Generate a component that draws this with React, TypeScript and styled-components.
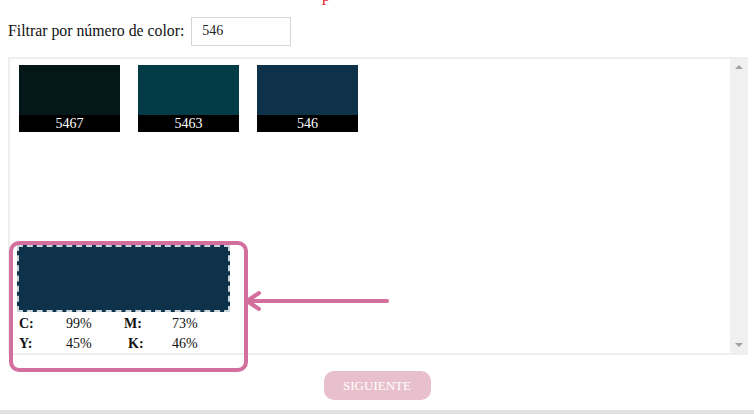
import React, { useState } from 'react';
import styled, { createGlobalStyle } from 'styled-components';

interface Swatch {
    code: string;
    color: string;
    cmyk: [number, number, number, number];
}

const swatches: Swatch[] = [
    { code: '5467', color: '#041719', cmyk: [90, 60, 70, 85] },
    { code: '5463', color: '#033b46', cmyk: [100, 45, 50, 60] },
    { code: '546', color: '#0d3249', cmyk: [99, 73, 45, 46] },
];

const GlobalStyle = createGlobalStyle`
    html, body {
        margin: 0;
        padding: 0;
        background: #ffffff;
    }
    body {
        font-family: "Liberation Serif", "Times New Roman", serif;
        color: #111;
    }
`;

const Page = styled.div`
    position: relative;
    width: 754px;
    height: 414px;
    overflow: hidden;
    box-sizing: border-box;
`;

const TopMark = styled.div`
    height: 5px;
    overflow: hidden;
    padding-left: 322px;
    color: #e0262b;
    font-size: 16px;
    line-height: 16px;

    span {
        display: block;
        margin-top: -12px;
    }
`;

const FilterRow = styled.div`
    display: flex;
    align-items: center;
    gap: 7px;
    margin: 11px 8px 0;
    height: 30px;
`;

const Label = styled.label`
    font-size: 15.8px;
    color: #111;
`;

const FilterInput = styled.input`
    width: 100px;
    height: 29px;
    box-sizing: border-box;
    border: 1px solid #d6d6d6;
    padding: 0 10px;
    font-family: "Liberation Serif", serif;
    font-size: 14px;
    color: #222;
    outline: none;
`;

const Panel = styled.div`
    display: flex;
    margin: 11px 8px 0;
    width: 740px;
    height: 298px;
    box-sizing: border-box;
    border: 2px solid #eeeeee;
    border-right-width: 0;
`;

const Content = styled.div`
    flex: 1;
    display: flex;
    flex-direction: column;
    justify-content: space-between;
    padding: 6px 0 0 0;
`;

const Grid = styled.div`
    display: flex;
    gap: 18px;
    padding-left: 9px;
`;

const Chip = styled.div<{ $color: string }>`
    width: 101px;
    height: 67px;
    background: ${p => p.$color};
    display: flex;
    flex-direction: column;
    justify-content: flex-end;
    cursor: pointer;
`;

const ChipLabel = styled.div`
    height: 17px;
    background: #000;
    color: #fff;
    font-size: 14px;
    line-height: 17px;
    text-align: center;
`;

const Selected = styled.div`
    padding: 0 0 0 7px;
    margin-bottom: -1px;
`;

const BigSwatch = styled.div<{ $color: string }>`
    width: 213px;
    height: 67px;
    box-sizing: border-box;
    background: ${p => p.$color};
    border: 2px dashed #c9d3da;
`;

const CmykGrid = styled.div`
    display: grid;
    grid-template-columns: 47px 58px 48px 50px;
    padding-left: 2px;
    margin-top: 2px;
    font-size: 14px;
    line-height: 20px;
`;

const Key = styled.span<{ $shift?: number }>`
    font-weight: bold;
    padding-left: ${p => p.$shift ?? 0}px;
`;

const Scrollbar = styled.div`
    width: 18px;
    background: #f0f0f0;
    display: flex;
    flex-direction: column;
    justify-content: space-between;
    align-items: center;
    padding: 6px 0;
    box-sizing: border-box;
`;

const Arrow = styled.div<{ $down?: boolean }>`
    width: 0;
    height: 0;
    border-left: 4px solid transparent;
    border-right: 4px solid transparent;
    ${p => p.$down
        ? 'border-top: 4px solid #a3a3a3;'
        : 'border-bottom: 4px solid #a3a3a3;'}
`;

const ButtonRow = styled.div`
    display: flex;
    justify-content: center;
    margin-top: 16px;
`;

const NextButton = styled.button`
    width: 107px;
    height: 29px;
    border: none;
    border-radius: 10px;
    background: #e8bfcc;
    color: #ffffff;
    font-family: "Liberation Serif", serif;
    font-size: 13px;
    cursor: pointer;
`;

const Footer = styled.div`
    margin-top: 10px;
    height: 4px;
    background: #e2e2e2;
`;

const Highlight = styled.div`
    position: absolute;
    left: 9px;
    top: 241px;
    width: 239px;
    height: 131px;
    box-sizing: border-box;
    border: 4px solid #d36f9d;
    border-radius: 10px;
    pointer-events: none;
`;

const Pointer = styled.svg`
    position: absolute;
    left: 244px;
    top: 290px;
    pointer-events: none;
`;

export default function App() {
    const [query, setQuery] = useState('546');
    const current = swatches[2];
    const [c, m, y, k] = current.cmyk;

    return (
        <Page>
            <GlobalStyle />
            <TopMark><span>p</span></TopMark>
            <FilterRow>
                <Label>Filtrar por número de color:</Label>
                <FilterInput value={query} onChange={e => setQuery(e.target.value)} />
            </FilterRow>
            <Panel>
                <Content>
                    <Grid>
                        {swatches.map(s => (
                            <Chip key={s.code} $color={s.color}>
                                <ChipLabel>{s.code}</ChipLabel>
                            </Chip>
                        ))}
                    </Grid>
                    <Selected>
                        <BigSwatch $color={current.color} />
                        <CmykGrid>
                            <Key>C:</Key><span>{c}%</span>
                            <Key>M:</Key><span>{m}%</span>
                            <Key>Y:</Key><span>{y}%</span>
                            <Key $shift={4}>K:</Key><span>{k}%</span>
                        </CmykGrid>
                    </Selected>
                </Content>
                <Scrollbar>
                    <Arrow />
                    <Arrow $down />
                </Scrollbar>
            </Panel>
            <ButtonRow>
                <NextButton>SIGUIENTE</NextButton>
            </ButtonRow>
            <Footer />
            <Highlight />
            <Pointer width="150" height="24" viewBox="0 0 150 24">
                <g stroke="#d36f9d" strokeWidth="4" strokeLinecap="round" fill="none">
                    <line x1="3" y1="11" x2="143" y2="11" />
                    <polyline points="15,3 3,11 15,19" />
                </g>
            </Pointer>
        </Page>
    );
}
